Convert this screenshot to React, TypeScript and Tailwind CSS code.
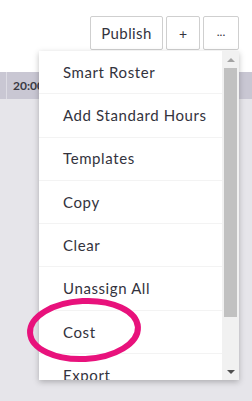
import React from "react";

const items = [
  "Smart Roster",
  "Add Standard Hours",
  "Templates",
  "Copy",
  "Clear",
  "Unassign All",
  "Cost",
  "Export",
];

const App = () => {
  return (
    <div className="relative w-[252px] h-[401px] overflow-hidden bg-[#e6e5ea] font-['Lato',sans-serif] text-[#33333d]">
      {/* header */}
      <div className="h-[72px] bg-white flex justify-end items-start pt-4 pr-[13px] gap-[3px]">
        <button className="h-[34px] w-[73px] border border-[#cfcfcf] rounded-[2px] text-[15px] tracking-[0.4px] bg-white">
          Publish
        </button>
        <button className="h-[34px] w-[34px] border border-[#cfcfcf] rounded-[2px] text-[14px] bg-white">
          +
        </button>
        <button className="h-[34px] w-[36px] border border-[#cfcfcf] rounded-[2px] text-[12px] bg-white leading-none pb-[3px]">
          ...
        </button>
      </div>

      {/* time band */}
      <div className="h-[27px] bg-[#c9c7d3] flex items-center">
        <div className="ml-[6px] w-px h-full bg-[#dddce4]" />
        <span className="ml-[6px] text-[12px] font-bold text-[#3a3a44]">20:00</span>
      </div>

      {/* dropdown */}
      <div className="absolute left-[39px] top-[51px] w-[200px] h-[329px] bg-white flex shadow-[0_2px_6px_rgba(0,0,0,0.25)]">
        <div className="flex-1 overflow-hidden">
          {items.map((label) => (
            <div
              key={label}
              className="h-[43.3px] border-b border-[#f3f3f3] flex items-center pl-6 text-[15px] tracking-[0.6px]"
            >
              {label}
            </div>
          ))}
        </div>
        <div className="w-[17px] bg-[#f1f1f1] flex flex-col items-center">
          <div className="h-[17px] flex items-center justify-center">
            <div className="w-0 h-0 border-l-[4px] border-r-[4px] border-b-[4px] border-l-transparent border-r-transparent border-b-[#a3a3a3]" />
          </div>
          <div className="w-[13px] h-[249px] bg-[#c1c1c1]" />
          <div className="flex-1" />
          <div className="h-[17px] flex items-center justify-center">
            <div className="w-0 h-0 border-l-[4px] border-r-[4px] border-t-[4px] border-l-transparent border-r-transparent border-t-[#505050]" />
          </div>
        </div>
      </div>

      {/* highlight ring */}
      <svg className="absolute left-0 top-0" width="252" height="401">
        <ellipse
          cx="84"
          cy="330"
          rx="54"
          ry="29"
          fill="none"
          stroke="#e8127c"
          strokeWidth="6"
          transform="rotate(-3 84 330)"
        />
      </svg>
    </div>
  );
};

export default App;
